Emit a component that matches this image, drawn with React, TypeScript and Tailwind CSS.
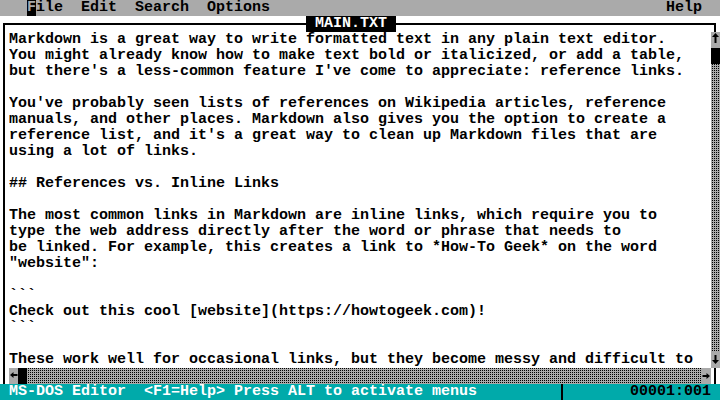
import React from "react";

const lines = [
  "Markdown is a great way to write formatted text in any plain text editor.",
  "You might already know how to make text bold or italicized, or add a table,",
  "but there's a less-common feature I've come to appreciate: reference links.",
  "",
  "You've probably seen lists of references on Wikipedia articles, reference",
  "manuals, and other places. Markdown also gives you the option to create a",
  "reference list, and it's a great way to clean up Markdown files that are",
  "using a lot of links.",
  "",
  "## References vs. Inline Links",
  "",
  "The most common links in Markdown are inline links, which require you to",
  "type the web address directly after the word or phrase that needs to",
  "be linked. For example, this creates a link to *How-To Geek* on the word",
  '"website":',
  "",
  "```",
  "Check out this cool [website](https://howtogeek.com)!",
  "```",
  "",
  "These work well for occasional links, but they become messy and difficult to",
];

// shade pattern used by the scrollbars
const shade = "bg-[conic-gradient(#000_0_25%,#aaaaaa_0)] bg-[length:2px_2px]";

function Arrow({ dir }: { dir: "up" | "down" | "left" | "right" }) {
  const d = {
    up: "M4.5 1 L8 5 L5.5 5 L5.5 11 L3.5 11 L3.5 5 L1 5 Z",
    down: "M3.5 3 L5.5 3 L5.5 8 L8 8 L4.5 12 L1 8 L3.5 8 Z",
    left: "M1 7 L4.5 4 L4.5 6 L8.5 6 L8.5 8 L4.5 8 L4.5 10 Z",
    right: "M0.5 7 L4.5 7 L4.5 5 L8 8 L4.5 11 L4.5 9 L0.5 9 Z",
  }[dir];
  return (
    <svg width="9" height="16" viewBox="0 0 9 16" className="block">
      <path d={d} fill="#000" />
    </svg>
  );
}

export default function App() {
  return (
    <div className="w-[720px] h-[400px] overflow-hidden flex flex-col bg-white text-black font-['Liberation_Mono',monospace] font-bold text-[15px] leading-[16px]">
      {/* Menu bar */}
      <div className="h-4 bg-[#aaaaaa] flex whitespace-pre">
        <span className="w-[27px]" />
        <span className="bg-black text-[#aaaaaa] w-[9px]">F</span>
        <span>ile  Edit  Search  Options</span>
        <span className="flex-1" />
        <span>Help</span>
        <span className="w-[18px]" />
      </div>

      {/* Window title border */}
      <div className="h-4 flex items-start">
        <div className="w-[9px] h-4">
          <div className="ml-[3px] mt-[7px] w-[6px] h-[9px] border-l-2 border-t-2 border-black" />
        </div>
        <div className="w-[297px] mt-[7px] h-[2px] bg-black" />
        <div className="w-[90px] h-4 bg-black text-white whitespace-pre"> MAIN.TXT </div>
        <div className="w-[315px] mt-[7px] h-[2px] bg-black" />
        <div className="w-[9px] h-4">
          <div className="mt-[7px] w-[5px] h-[9px] border-r-2 border-t-2 border-black" />
        </div>
      </div>

      {/* Text area */}
      <div className="h-[336px] flex">
        <div className="w-[9px]">
          <div className="ml-[3px] w-[2px] h-full bg-black" />
        </div>
        <div className="w-[702px] overflow-hidden whitespace-pre">
          {lines.map((l, i) => (
            <div key={i} className="h-4">
              {l}
            </div>
          ))}
        </div>
        <div className="w-[9px] flex flex-col">
          <div className="h-4 bg-[#aaaaaa]">
            <Arrow dir="up" />
          </div>
          <div className="h-4 bg-black" />
          <div className={`flex-1 ${shade}`} />
          <div className="h-4 bg-[#aaaaaa]">
            <Arrow dir="down" />
          </div>
        </div>
      </div>

      {/* Horizontal scrollbar */}
      <div className="h-4 flex">
        <div className="w-[9px]">
          <div className="ml-[3px] w-[2px] h-full bg-black" />
        </div>
        <div className="w-[9px] bg-[#aaaaaa]">
          <Arrow dir="left" />
        </div>
        <div className="w-[9px] bg-black" />
        <div className={`w-[675px] ${shade}`} />
        <div className="w-[9px] bg-[#aaaaaa]">
          <Arrow dir="right" />
        </div>
        <div className="w-[9px]">
          <div className="ml-[3px] w-[2px] h-full bg-black" />
        </div>
      </div>

      {/* Status bar */}
      <div className="h-4 bg-[#00aaaa] flex whitespace-pre">
        <div className="w-[558px] pl-[9px] text-white">
          MS-DOS Editor  &lt;F1=Help&gt; Press ALT to activate menus
        </div>
        <div className="w-[9px]">
          <div className="ml-[3px] w-[2px] h-full bg-black" />
        </div>
        <div className="w-[63px]" />
        <div className="w-[81px] text-black">00001:001</div>
        <div className="w-[9px]" />
      </div>
    </div>
  );
}
